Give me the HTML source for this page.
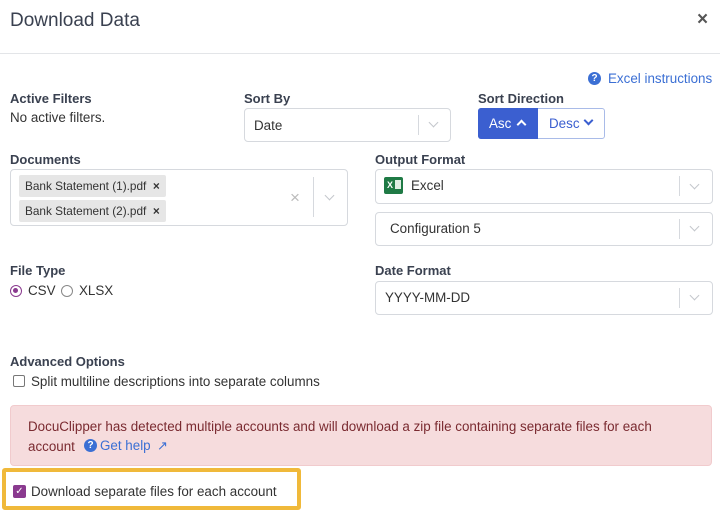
<!DOCTYPE html>
<html><head><style>
*{box-sizing:border-box;margin:0;padding:0}
body{width:720px;height:509px;background:#fff;font-family:"Liberation Sans",sans-serif;color:#333;position:relative;overflow:hidden;font-size:13.4px}
.a{position:absolute;white-space:nowrap}
.lbl{font-weight:bold;color:#3a4150;font-size:13px}
.box{position:absolute;border:1px solid #d6d9de;border-radius:4px;background:#fff}
.sep{position:absolute;width:1px;background:#d6d9de}
.chev{position:absolute;width:7px;height:7px;border-right:1.3px solid #c4c7cc;border-bottom:1.3px solid #c4c7cc;transform:rotate(45deg)}
.tag{position:absolute;background:#e6e6e6;border-radius:2px;font-size:11.8px;padding:4px 6px;color:#333}
</style></head><body>
<div class="a" style="left:10px;top:10px;font-size:19px;color:#3a4150">Download Data</div>
<div class="a" style="left:697px;top:9px;font-size:19px;color:#555;font-weight:bold">×</div>
<div class="a" style="left:0;top:53px;width:720px;height:1px;background:#e3e5e8"></div>

<div class="a" style="left:588px;top:72px;width:13px;height:13px;border-radius:50%;background:#3b6fd4;color:#fff;font-size:10px;font-weight:bold;text-align:center;line-height:13px">?</div>
<div class="a" style="left:608px;top:71px;color:#3b6fd4">Excel instructions</div>

<div class="a lbl" style="left:10px;top:91px">Active Filters</div>
<div class="a" style="left:10px;top:110px">No active filters.</div>

<div class="a lbl" style="left:244px;top:91px">Sort By</div>
<div class="box" style="left:244px;top:108px;width:207px;height:34px"></div>
<div class="a" style="left:254px;top:118px">Date</div>
<div class="sep" style="left:418px;top:115px;height:20px"></div>
<div class="chev" style="left:430px;top:119px"></div>

<div class="a lbl" style="left:478px;top:91px">Sort Direction</div>
<div class="a" style="left:478px;top:108px;width:127px;height:31px;border:1px solid #a9bbe8;border-radius:3px"></div>
<div class="a" style="left:478px;top:108px;width:60px;height:31px;background:#3b5fd0;border-radius:3px 0 0 3px;color:#fff;padding:8px 0 0 11px">Asc</div>
<div class="a" style="left:518px;top:121px;width:7px;height:7px;border-left:2px solid #fff;border-top:2px solid #fff;transform:rotate(45deg)"></div>
<div class="a" style="left:549px;top:116px;color:#3b5fd0">Desc</div>
<div class="a" style="left:585px;top:117px;width:7px;height:7px;border-right:2px solid #3b5fd0;border-bottom:2px solid #3b5fd0;transform:rotate(45deg)"></div>

<div class="a lbl" style="left:10px;top:152px">Documents</div>
<div class="box" style="left:10px;top:169px;width:338px;height:57px"></div>
<div class="tag" style="left:19px;top:175px">Bank Statement (1).pdf &nbsp;<b>×</b></div>
<div class="tag" style="left:19px;top:200px">Bank Statement (2).pdf &nbsp;<b>×</b></div>
<div class="a" style="left:290px;top:188px;color:#bbb;font-size:17px">×</div>
<div class="sep" style="left:313px;top:177px;height:40px"></div>
<div class="chev" style="left:326px;top:192px"></div>

<div class="a lbl" style="left:375px;top:152px">Output Format</div>
<div class="box" style="left:375px;top:169px;width:338px;height:35px"></div>
<div class="a" style="left:384px;top:177px;width:19px;height:17px;background:#1f7a45;border-radius:2px;color:#fff;font-size:9px;font-weight:bold;padding:3px 0 0 3px">X<span style="display:inline-block;width:6px;height:9px;background:#dfeee4;margin-left:2px;vertical-align:-1px"></span></div>
<div class="a" style="left:411px;top:178px">Excel</div>
<div class="sep" style="left:679px;top:176px;height:20px"></div>
<div class="chev" style="left:691px;top:181px"></div>

<div class="box" style="left:375px;top:212px;width:338px;height:34px"></div>
<div class="a" style="left:390px;top:221px">Configuration 5</div>
<div class="sep" style="left:679px;top:219px;height:20px"></div>
<div class="chev" style="left:691px;top:223px"></div>

<div class="a lbl" style="left:10px;top:263px">File Type</div>
<div class="a" style="left:10px;top:285px;width:12px;height:12px;border:1.5px solid #8a3a8f;border-radius:50%"><div style="margin:2px;width:5px;height:5px;border-radius:50%;background:#8a3a8f"></div></div>
<div class="a" style="left:28px;top:283px">CSV</div>
<div class="a" style="left:61px;top:285px;width:12px;height:12px;border:1px solid #888;border-radius:50%"></div>
<div class="a" style="left:79px;top:283px">XLSX</div>

<div class="a lbl" style="left:375px;top:263px">Date Format</div>
<div class="box" style="left:375px;top:281px;width:338px;height:34px"></div>
<div class="a" style="left:385px;top:290px">YYYY-MM-DD</div>
<div class="sep" style="left:679px;top:288px;height:20px"></div>
<div class="chev" style="left:691px;top:292px"></div>

<div class="a lbl" style="left:10px;top:354px">Advanced Options</div>
<div class="a" style="left:13px;top:375px;width:12px;height:12px;border:1px solid #777;border-radius:2px"></div>
<div class="a" style="left:31px;top:374px">Split multiline descriptions into separate columns</div>

<div class="a" style="left:10px;top:405px;width:702px;height:61px;background:#f6dcdd;border:1px solid #f1cbcd;border-radius:4px"></div>
<div class="a" style="left:28px;top:419px;color:#7a2a30">DocuClipper has detected multiple accounts and will download a zip file containing separate files for each</div>
<div class="a" style="left:28px;top:439px;color:#7a2a30">account</div>
<div class="a" style="left:84px;top:439px;width:13px;height:13px;border-radius:50%;background:#3b6fd4;color:#fff;font-size:10px;font-weight:bold;text-align:center;line-height:13px">?</div>
<div class="a" style="left:100px;top:438px;color:#3b6fd4">Get help</div>
<div class="a" style="left:157px;top:438px;color:#3b6fd4;font-size:13px">↗</div>

<div class="a" style="left:2px;top:468px;width:299px;height:42px;border:4px solid #f0b93a;border-radius:3px"></div>
<div class="a" style="left:13px;top:485px;width:13px;height:13px;background:#8a3a8f;border-radius:2px;color:#fff;font-size:10px;text-align:center;line-height:13px">✓</div>
<div class="a" style="left:31px;top:484px">Download separate files for each account</div>
</body></html>
